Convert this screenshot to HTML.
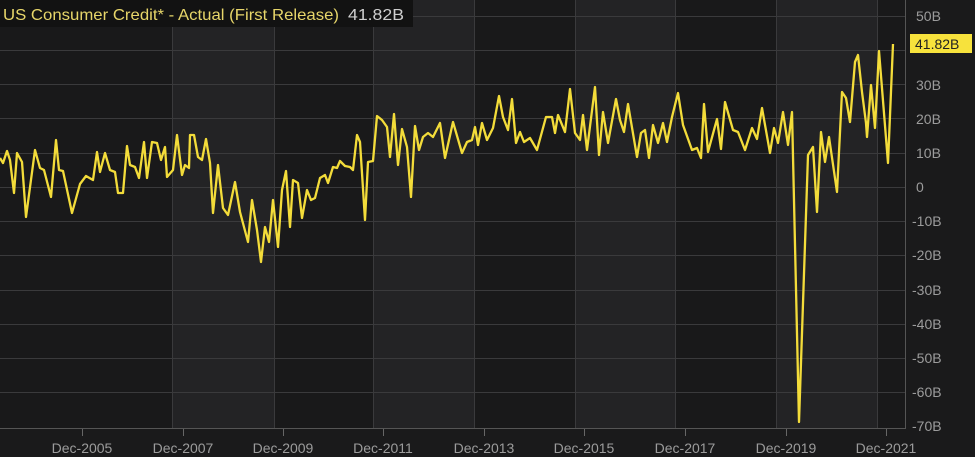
<!DOCTYPE html>
<html><head><meta charset="utf-8"><style>
html,body{margin:0;padding:0;background:#1a1a1b;}
svg{display:block}
text{font-family:"Liberation Sans",sans-serif;}
</style></head><body>
<svg width="975" height="457" viewBox="0 0 975 457" xmlns="http://www.w3.org/2000/svg">
<rect width="975" height="457" fill="#1a1a1b"/>
<rect x="0" y="0" width="905" height="428" fill="#19191a"/>
<g fill="#232325">
<rect x="172" y="0" width="102" height="428"/>
<rect x="373" y="0" width="101" height="428"/>
<rect x="575" y="0" width="100" height="428"/>
<rect x="776" y="0" width="101" height="428"/>
</g>
<g stroke="#3a3a3c" stroke-width="1">
<line x1="0" x2="905" y1="16.5" y2="16.5"/>
<line x1="0" x2="905" y1="50.5" y2="50.5"/>
<line x1="0" x2="905" y1="84.5" y2="84.5"/>
<line x1="0" x2="905" y1="118.5" y2="118.5"/>
<line x1="0" x2="905" y1="153.5" y2="153.5"/>
<line x1="0" x2="905" y1="187.5" y2="187.5"/>
<line x1="0" x2="905" y1="221.5" y2="221.5"/>
<line x1="0" x2="905" y1="255.5" y2="255.5"/>
<line x1="0" x2="905" y1="290.5" y2="290.5"/>
<line x1="0" x2="905" y1="324.5" y2="324.5"/>
<line x1="0" x2="905" y1="358.5" y2="358.5"/>
<line x1="0" x2="905" y1="392.5" y2="392.5"/>
<line x1="172.5" x2="172.5" y1="0" y2="428"/>
<line x1="274.5" x2="274.5" y1="0" y2="428"/>
<line x1="373.5" x2="373.5" y1="0" y2="428"/>
<line x1="474.5" x2="474.5" y1="0" y2="428"/>
<line x1="575.5" x2="575.5" y1="0" y2="428"/>
<line x1="675.5" x2="675.5" y1="0" y2="428"/>
<line x1="776.5" x2="776.5" y1="0" y2="428"/>
<line x1="877.5" x2="877.5" y1="0" y2="428"/>
</g>
<line x1="0" x2="905" y1="428.5" y2="428.5" stroke="#555" stroke-width="1"/>
<line x1="905.5" x2="905.5" y1="0" y2="429" stroke="#555" stroke-width="1"/>
<g stroke="#666" stroke-width="1">
<line x1="82.5" x2="82.5" y1="429" y2="436"/><line x1="183.5" x2="183.5" y1="429" y2="436"/>
<line x1="283.5" x2="283.5" y1="429" y2="436"/><line x1="383.5" x2="383.5" y1="429" y2="436"/>
<line x1="484.5" x2="484.5" y1="429" y2="436"/><line x1="584.5" x2="584.5" y1="429" y2="436"/>
<line x1="685.5" x2="685.5" y1="429" y2="436"/><line x1="786.5" x2="786.5" y1="429" y2="436"/>
<line x1="886.5" x2="886.5" y1="429" y2="436"/>
</g>
<polyline fill="none" stroke="#f3dc3a" stroke-width="2.3" stroke-linejoin="round" points="
0,158 3,163 7,151 10,160 14,193 17,153 22,162 26,217 35,150 40,168 44,170 51,197 56,140 59,170 63,171 72,213 80,184 86,176 93,180 97,152 100,172 105,153 110,170 115,172 118,193 123,193 127,146 130,165 135,167 139,178 144,142 147,178 152,142 157,143 161,160 165,147 167,177 173,170 177,135 182,175 185,165 189,168 190,135 194,135 198,157 202,160 206,139 210,163 213,213 218,165 223,208 228,215 235,182 240,212 248,242 252,200 257,230 261,262 265,227 269,242 273,200 278,247 282,190 286,171 290,227 293,180 298,183 302,218 307,190 311,200 315,198 320,178 325,175 328,183 333,167 337,168 340,161 345,166 350,167 353,170 357,135 360,142 365,220 368,162 373,161 377,116 382,120 387,127 390,157 394,114 398,165 402,129 407,147 411,197 415,126 419,150 423,137 428,133 433,137 440,123 445,158 453,122 462,153 467,142 472,140 475,127 478,145 482,123 487,140 493,128 499,96 503,117 508,130 512,99 516,143 520,132 524,142 530,138 537,150 546,117 552,117 555,133 558,115 565,132 570,89 575,133 580,140 583,115 587,150 595,87 599,155 603,112 608,143 616,99 620,120 624,132 628,104 637,157 641,133 645,130 649,158 653,125 658,143 663,123 667,142 672,117 678,93 683,125 692,150 697,148 701,158 704,104 708,152 717,119 721,149 725,102 733,130 738,132 745,150 752,128 757,139 762,108 770,153 774,128 778,143 783,112 788,145 792,112 799,422 808,155 813,147 817,212 821,132 825,162 829,137 837,192 842,92 846,98 850,122 855,62 858,55 862,92 866,123 867,137 871,85 875,128 879,51 888,163 893,44"/>
<rect x="0" y="0" width="413" height="27" fill="#121212"/>
<text x="3" y="20" font-size="16" fill="#e7d66a" textLength="336" lengthAdjust="spacingAndGlyphs">US Consumer Credit* - Actual (First Release)</text>
<text x="348" y="20" font-size="16" fill="#cfcfcf" textLength="56" lengthAdjust="spacingAndGlyphs">41.82B</text>
<g font-size="14" fill="#9c9c9c">
<text x="916" y="21">50B</text>
<text x="916" y="90">30B</text>
<text x="916" y="124">20B</text>
<text x="916" y="158">10B</text>
<text x="916" y="192">0</text>
<text x="912" y="226">-10B</text>
<text x="912" y="260">-20B</text>
<text x="912" y="295">-30B</text>
<text x="912" y="329">-40B</text>
<text x="912" y="363">-50B</text>
<text x="912" y="397">-60B</text>
<text x="912" y="431">-70B</text>
</g>
<rect x="910" y="34" width="62" height="19" fill="#f7e23c"/>
<text x="915" y="49" font-size="14" fill="#222">41.82B</text>
<g font-size="14" fill="#9c9c9c" text-anchor="middle">
<text x="82" y="453">Dec-2005</text><text x="183" y="453">Dec-2007</text>
<text x="283" y="453">Dec-2009</text><text x="383" y="453">Dec-2011</text>
<text x="484" y="453">Dec-2013</text><text x="584" y="453">Dec-2015</text>
<text x="685" y="453">Dec-2017</text><text x="786" y="453">Dec-2019</text>
<text x="886" y="453">Dec-2021</text>
</g>
</svg>
</body></html>
